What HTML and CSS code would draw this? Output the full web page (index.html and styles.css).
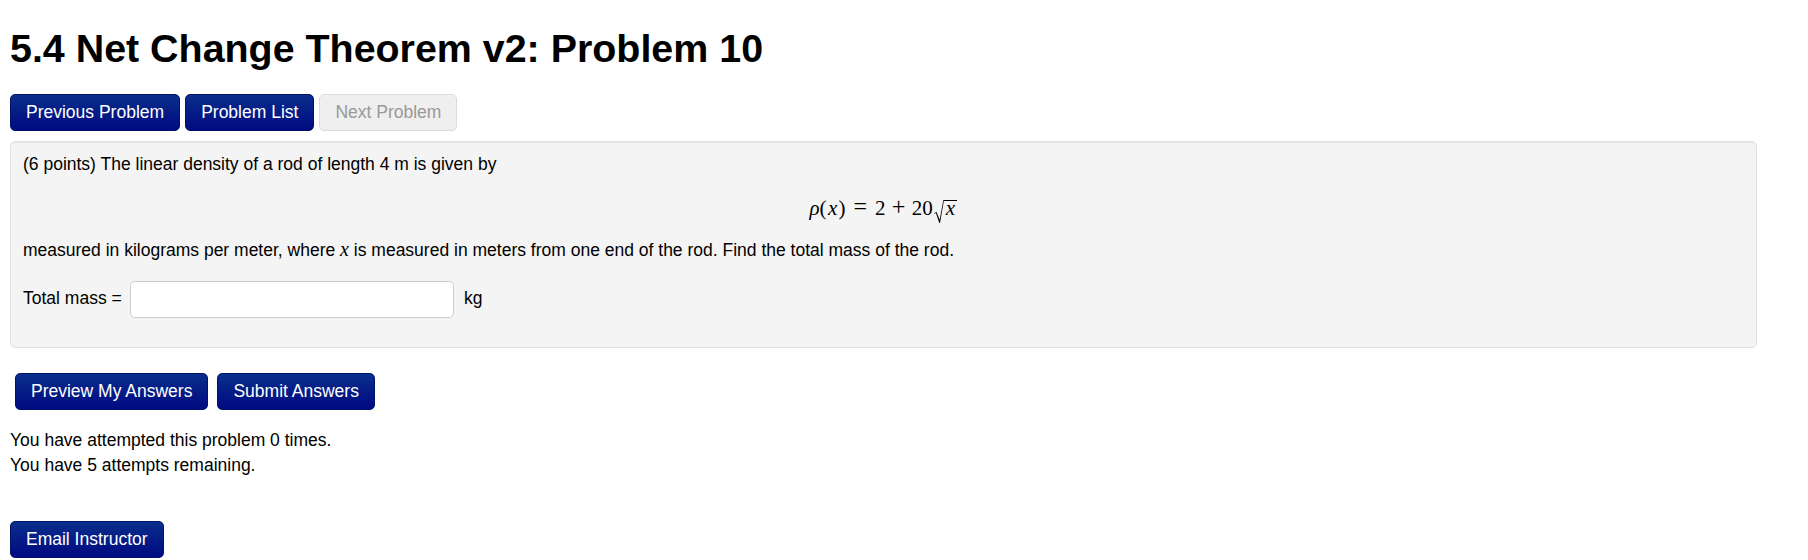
FILE: index.html
```html
<!DOCTYPE html>
<html lang="en">
<head>
<meta charset="utf-8">
<title>5.4 Net Change Theorem v2: Problem 10</title>
<link rel="stylesheet" href="styles.css">
</head>
<body>
<h1 class="title">5.4 Net Change Theorem v2: Problem 10</h1>
<div class="nav">
  <a class="btn btn-primary">Previous Problem</a>
  <a class="btn btn-primary">Problem List</a>
  <a class="btn btn-disabled">Next Problem</a>
</div>
<div class="well">
  <p class="ptext">(6 points) The linear density of a rod of length 4 m is given by</p>
  <div class="display-math"><span class="mi">ρ</span><span class="mo lp">(</span><span class="mi mx">x</span><span class="mo rp">)</span><span class="rel">=</span><span class="mn">2</span><span class="bin">+</span><span class="mn">20</span><span class="sqrt"><svg class="radical" width="10" height="23" viewBox="0 0 10 23"><path d="M0.2 13.4 L2.4 11.8 L5.7 19.8 L9.3 0 L10 0 L6 22.9 L5.3 22.9 L1.9 13.1 L0.6 14 Z" fill="#000"/></svg><span class="radicand mi">x</span></span></div>
  <p class="ptext">measured in kilograms per meter, where <span class="imath">x</span> is measured in meters from one end of the rod. Find the total mass of the rod.</p>
  <p class="answer">Total mass = <input class="ans-input" type="text"> kg</p>
</div>
<div class="submit-row">
  <a class="btn btn-primary">Preview My Answers</a>
  <a class="btn btn-primary">Submit Answers</a>
</div>
<p class="attempts">You have attempted this problem 0 times.<br>You have 5 attempts remaining.</p>
<div class="email-row">
  <a class="btn btn-primary">Email Instructor</a>
</div>
</body>
</html>
```
FILE: styles.css
```css
html, body {
  background: #ffffff;
}
body {
  margin: 0;
  padding: 0 10px;
  font-family: "Liberation Sans", Arial, sans-serif;
  font-size: 17.5px;
  line-height: 25px;
  color: #000000;
}
.title {
  margin: 22.5px 0 0;
  font-size: 39.4px;
  line-height: 50px;
  font-weight: 700;
  color: #000000;
}
.nav {
  display: flex;
  gap: 5px;
  margin-top: 21.5px;
}
.btn {
  display: inline-block;
  padding: 5px 15px;
  font-size: 17.5px;
  line-height: 25px;
  border-radius: 5px;
  border: 1px solid #00156b;
  text-decoration: none;
  cursor: pointer;
  white-space: nowrap;
}
.btn-primary {
  color: #ffffff;
  background: linear-gradient(to bottom, #0a2e8a 0%, #000a82 100%);
  border-color: #001466;
}
.btn-disabled {
  color: #999999;
  background: #efefef;
  border-color: #dcdcdc;
}
.well {
  width: 1747px;
  box-sizing: border-box;
  margin-top: 10px;
  padding: 10px 12px;
  background: #f4f4f4;
  border: 1px solid #e2e2e2;
  border-radius: 5px;
  box-shadow: inset 0 1px 1px rgba(0, 0, 0, 0.05);
}
.ptext {
  margin: 0;
}
.display-math {
  height: 25px;
  margin: 17.5px 0 18px;
  text-align: center;
  font-family: "Liberation Serif", "Times New Roman", serif;
  font-size: 21px;
  line-height: 25px;
  white-space: nowrap;
}
.mi {
  font-style: italic;
}
.mx {
  margin: 0 1px 0 1.5px;
}
.rel {
  font-size: 1.15em;
  line-height: 1;
  margin: 0 0.33em;
}
.bin {
  font-size: 1.15em;
  line-height: 1;
  margin: 0 0.26em;
}
.sqrt {
  margin-left: 1.5px;
}
.radical {
  display: inline-block;
  vertical-align: -8px;
}
.radicand {
  display: inline-block;
  border-top: 1.2px solid #000;
  line-height: 14px;
  padding: 0 2.5px 0 1.5px;
}
.imath {
  font-family: "Liberation Serif", "Times New Roman", serif;
  font-style: italic;
  font-size: 20px;
  line-height: 1;
}
.answer {
  margin: 18.6px 0 19px;
}
.ans-input {
  box-sizing: border-box;
  width: 324px;
  height: 36.6px;
  margin: 0 5.5px 0 3px;
  padding: 5px 7.5px;
  vertical-align: middle;
  font-family: "Liberation Sans", Arial, sans-serif;
  font-size: 17.5px;
  background: #ffffff;
  border: 1px solid #cccccc;
  border-radius: 5px;
}
.submit-row {
  display: flex;
  gap: 9px;
  padding-left: 5px;
  margin-top: 25.7px;
}
.attempts {
  margin: 17.7px 0 0;
}
.email-row {
  display: flex;
  margin-top: 42.6px;
}
```
